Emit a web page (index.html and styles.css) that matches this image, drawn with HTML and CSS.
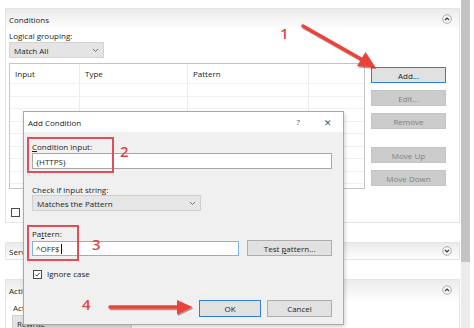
FILE: index.html
```html
<!DOCTYPE html>
<html lang="en">
<head>
    <meta charset="UTF-8">
    <meta name="viewport" content="width=device-width, initial-scale=1.0">
    <title>Edit Inbound Rule</title>
    <link rel="stylesheet" href="styles.css">
</head>
<body>
    <div class="screen">
        <div class="workspace">
            <section class="group">
                <div class="group-head head-conditions">
                    <span>Conditions</span>
                    <svg class="fold" viewBox="0 0 10 10"><circle cx="5" cy="5" r="4.3"/><polyline points="3,6 5,4 7,6"/></svg>
                </div>
                <div class="group-body body-conditions">
                    <p class="field-label">Logical grouping:</p>
                    <div class="select select-grouping">
                        <span>Match All</span>
                        <svg class="chevron" viewBox="0 0 7 5"><polyline points="1,1 3.5,3.5 6,1"/></svg>
                    </div>
                    <div class="conditions-row">
                        <div class="grid">
                            <div class="grid-row grid-head"><span>Input</span><span>Type</span><span>Pattern</span><span></span></div>
                            <div class="grid-row"><span></span><span></span><span></span><span></span></div>
                            <div class="grid-row"><span></span><span></span><span></span><span></span></div>
                            <div class="grid-row"><span></span><span></span><span></span><span></span></div>
                            <div class="grid-row"><span></span><span></span><span></span><span></span></div>
                            <div class="grid-row"><span></span><span></span><span></span><span></span></div>
                            <div class="grid-row"><span></span><span></span><span></span><span></span></div>
                            <div class="grid-row"><span></span><span></span><span></span><span></span></div>
                            <div class="grid-row"><span></span><span></span><span></span><span></span></div>
                        </div>
                        <div class="side-buttons">
                            <button class="btn btn-focus">Add...</button>
                            <button class="btn" disabled>Edit...</button>
                            <button class="btn" disabled>Remove</button>
                            <button class="btn btn-gap" disabled>Move Up</button>
                            <button class="btn" disabled>Move Down</button>
                        </div>
                    </div>
                    <!-- label of this checkbox sits under the dialog -->
                    <div class="check-row main-check"><span class="check-box"></span></div>
                </div>
            </section>

            <section class="group group-collapsed">
                <div class="group-head head-server">
                    <span>Server Variables</span>
                    <svg class="fold" viewBox="0 0 10 10"><circle cx="5" cy="5" r="4.3"/><polyline points="3,4 5,6 7,4"/></svg>
                </div>
            </section>

            <section class="group group-open">
                <div class="group-head head-action">
                    <span>Action</span>
                    <svg class="fold" viewBox="0 0 10 10"><circle cx="5" cy="5" r="4.3"/><polyline points="3,6 5,4 7,6"/></svg>
                </div>
                <div class="group-body body-action">
                    <p class="field-label">Action type:</p>
                    <div class="select select-action"><span>Rewrite</span></div>
                </div>
            </section>
        </div>
        <div class="scrollbar"><div class="thumb"></div></div>
    </div>

    <div class="dialog">
        <div class="dialog-title">
            <span>Add Condition</span>
            <span class="title-tools"><span>?</span><span class="close">&#x2715;</span></span>
        </div>
        <div class="dialog-body">
            <p class="field-label"><u>C</u>ondition input:</p>
            <div class="text-input input-wide">{HTTPS}</div>

            <p class="field-label label-check">Check if input string:</p>
            <div class="select select-match">
                <span>Matches the Pattern</span>
                <svg class="chevron" viewBox="0 0 7 5"><polyline points="1,1 3.5,3.5 6,1"/></svg>
            </div>

            <p class="field-label label-pattern">Pa<u>t</u>tern:</p>
            <div class="pattern-row">
                <div class="text-input input-pattern">^OFF$<span class="caret"></span></div>
                <button class="btn btn-plain btn-test">Test <u>p</u>attern...</button>
            </div>

            <label class="check-row dialog-check"><span class="check-box checked"><svg viewBox="0 0 9 9"><polyline points="1.8,4.6 3.7,6.5 7.3,2.4"/></svg></span>Ignore case</label>

            <div class="dialog-actions">
                <button class="btn btn-focus btn-ok">OK</button>
                <button class="btn btn-plain btn-cancel">Cancel</button>
            </div>
        </div>
    </div>

    <!-- annotation layer drawn over the screenshot -->
    <div class="mark mark-input"></div>
    <div class="mark mark-pattern"></div>
    <span class="step step-1">1</span>
    <span class="step step-2">2</span>
    <span class="step step-3">3</span>
    <span class="step step-4">4</span>
    <svg class="arrows" viewBox="0 0 474 328">
        <g class="arrow-shadow" transform="translate(1 1.5)">
            <line x1="303" y1="26" x2="362" y2="59.5"/>
            <polygon points="357,66 375.5,67.5 365.5,52"/>
            <line x1="110" y1="307" x2="178" y2="307"/>
            <polygon points="177,300 192.5,307 177,314.5"/>
        </g>
        <g class="arrow">
            <line x1="303" y1="26" x2="362" y2="59.5"/>
            <polygon points="357,66 375.5,67.5 365.5,52"/>
            <line x1="110" y1="307" x2="178" y2="307"/>
            <polygon points="177,300 192.5,307 177,314.5"/>
        </g>
    </svg>
</body>
</html>
```

FILE: styles.css
```css
:root {
    --text-color: #1e1e1e;
    --line-color: #dcdcdc;
    --panel-head-top: #ebebeb;
    --panel-head-bottom: #fdfdfd;
    --focus-color: #2f80d1;
    --mark-color: #de4f57;
    --arrow-color: #e8443a;
}

body {
    margin: 0;
    font-family: "Open Sans", "Noto Sans", sans-serif;
    font-size: 8px;
    color: var(--text-color);
    background-color: #ffffff;
    width: 474px;
    height: 328px;
    overflow: hidden;
    position: relative;
}

p {
    margin: 0;
}

button {
    font-family: inherit;
    font-size: 8px;
    padding: 0;
}

.screen {
    display: flex;
    height: 328px;
}

.workspace {
    width: 455px;
    margin-left: 5px;
    padding-top: 8px;
}

.scrollbar {
    width: 9px;
    margin-left: 1px;
    background-color: #ebebeb;
}

.thumb {
    height: 262px;
    background-color: #c3c3c3;
}

/* collapsible panels */

.group-head {
    display: flex;
    align-items: center;
    justify-content: space-between;
    padding: 0 7px 0 3px;
    border: 1px solid #e4e4e4;
    background: linear-gradient(var(--panel-head-top), var(--panel-head-bottom));
}

.head-conditions {
    height: 20px;
    border-bottom: none;
}

.head-server {
    height: 16px;
}

.head-action {
    height: 20px;
    border-bottom: none;
}

.group-collapsed {
    margin-top: 19px;
}

.group-open {
    margin-top: 19px;
}

.fold {
    width: 10px;
    height: 10px;
}

.fold circle {
    fill: #f6f6f6;
    stroke: #9c9c9c;
    stroke-width: 0.8;
}

.fold polyline {
    fill: none;
    stroke: #3c3c3c;
    stroke-width: 1.2;
}

.group-body {
    border: 1px solid #e4e4e4;
    border-top: none;
}

.body-conditions {
    height: 191px;
    padding: 2px 13px 0 3px;
}

.body-action {
    height: 40px;
    padding: 3px 0 0 6px;
}

.field-label {
    line-height: 10px;
    height: 10px;
}

.body-action .field-label {
    padding-left: 1px;
}

/* drop-downs */

.select {
    display: flex;
    align-items: center;
    justify-content: space-between;
    box-sizing: border-box;
    height: 16px;
    padding: 0 4px 0 4px;
    background-color: #e4e4e4;
    border: 1px solid #d2d2d2;
}

.select-grouping {
    width: 95px;
    margin-top: 1px;
}

.select-action {
    width: 120px;
    margin-top: 2px;
}

.select-match {
    width: 169px;
    background-color: #e6e6e6;
    border-color: #cfcfcf;
}

.chevron {
    width: 7px;
    height: 5px;
}

.chevron polyline {
    fill: none;
    stroke: #6e6e6e;
    stroke-width: 1;
}

/* conditions list */

.conditions-row {
    display: flex;
    gap: 6px;
    margin-top: 5px;
}

.grid {
    box-sizing: border-box;
    width: 356px;
    height: 126px;
    border: 1px solid #c4c4c4;
    overflow: hidden;
}

.grid-row {
    display: grid;
    grid-template-columns: 70px 108px 121px 1fr;
    height: 12.5px;
    border-bottom: 1px solid #f0f0f0;
    box-sizing: border-box;
}

.grid-row span {
    border-right: 1px solid #ececec;
}

.grid-row span:last-child {
    border-right: none;
}

.grid-head {
    height: 20px;
    align-items: center;
}

.grid-head span {
    height: 100%;
    display: flex;
    align-items: center;
    padding-left: 5px;
}

.side-buttons {
    display: flex;
    flex-direction: column;
    gap: 7px;
    padding-top: 4px;
}

.btn {
    box-sizing: border-box;
    width: 75px;
    height: 16px;
    background-color: #cccccc;
    border: 1px solid #c3c3c3;
    color: #808080;
}

.btn-gap {
    margin-top: 11px;
}

.btn-focus {
    background-color: #e1e1e1;
    border: 1.5px solid var(--focus-color);
    color: var(--text-color);
}

.btn-plain {
    background-color: #e1e1e1;
    border: 1px solid #adadad;
    color: var(--text-color);
}

.check-row {
    display: flex;
    align-items: center;
    gap: 5px;
    line-height: 10px;
}

.check-box {
    box-sizing: border-box;
    width: 9px;
    height: 9px;
    border: 1px solid #4a4a4a;
    background-color: #ffffff;
    display: flex;
}

.check-box svg {
    width: 100%;
    height: 100%;
}

.check-box polyline {
    fill: none;
    stroke: #222222;
    stroke-width: 1.1;
}

.main-check {
    height: 10px;
    margin: 18px 0 0 2px;
}

/* Add Condition dialog */

.dialog {
    position: absolute;
    left: 23px;
    top: 111px;
    width: 321px;
    height: 214px;
    box-sizing: border-box;
    border: 1px solid #a9a9a9;
    background-color: #f0f0f0;
    box-shadow: 1px 2px 4px rgba(0, 0, 0, 0.18);
}

.dialog-title {
    display: flex;
    align-items: center;
    justify-content: space-between;
    height: 20px;
    padding: 0 11px 0 4px;
    background-color: #ffffff;
    color: #222222;
}

.title-tools {
    display: flex;
    gap: 24px;
    color: #555555;
}

.close {
    font-size: 9px;
}

.dialog-body {
    padding: 10px 11px 0 8px;
}

.text-input {
    box-sizing: border-box;
    height: 16px;
    margin-top: 1px;
    padding: 0 3px;
    display: flex;
    align-items: center;
    background-color: #ffffff;
    border: 1px solid #a8a8a8;
}

.input-wide {
    width: 300px;
}

.label-check {
    margin-top: 16px;
}

.label-pattern {
    margin-top: 18px;
}

.pattern-row {
    display: flex;
    gap: 8px;
    margin-top: 1px;
}

.input-pattern {
    width: 208px;
    height: 15px;
    margin-top: 1px;
    border-color: #7fb4e6;
}

.caret {
    width: 1px;
    height: 10px;
    margin-left: 1px;
    background-color: #111111;
}

.btn-test {
    width: 85px;
}

.dialog-check {
    margin-top: 13px;
    padding-left: 1px;
}

.dialog-actions {
    display: flex;
    justify-content: flex-end;
    gap: 6px;
    margin-top: 21px;
}

.btn-ok {
    width: 62px;
    height: 17px;
}

.btn-cancel {
    width: 65px;
    height: 17px;
}

/* red annotations */

.mark {
    position: absolute;
    border: 2px solid var(--mark-color);
    box-sizing: border-box;
}

.mark-input {
    left: 27px;
    top: 137px;
    width: 87px;
    height: 36px;
}

.mark-pattern {
    left: 27px;
    top: 225px;
    width: 52px;
    height: 36px;
}

.step {
    position: absolute;
    font-size: 15px;
    font-weight: 600;
    line-height: 15px;
    color: #d8474b;
}

.step-1 {
    left: 280px;
    top: 26px;
}

.step-2 {
    left: 120px;
    top: 144px;
}

.step-3 {
    left: 92px;
    top: 237px;
}

.step-4 {
    left: 82px;
    top: 297px;
}

.arrows {
    position: absolute;
    left: 0;
    top: 0;
    width: 474px;
    height: 328px;
    pointer-events: none;
}

.arrow line,
.arrow-shadow line {
    stroke-width: 3.5;
    stroke-linecap: round;
}

.arrow line {
    stroke: var(--arrow-color);
}

.arrow polygon {
    fill: var(--arrow-color);
}

.arrow-shadow line {
    stroke: rgba(140, 20, 20, 0.45);
}

.arrow-shadow polygon {
    fill: rgba(140, 20, 20, 0.45);
}
```
